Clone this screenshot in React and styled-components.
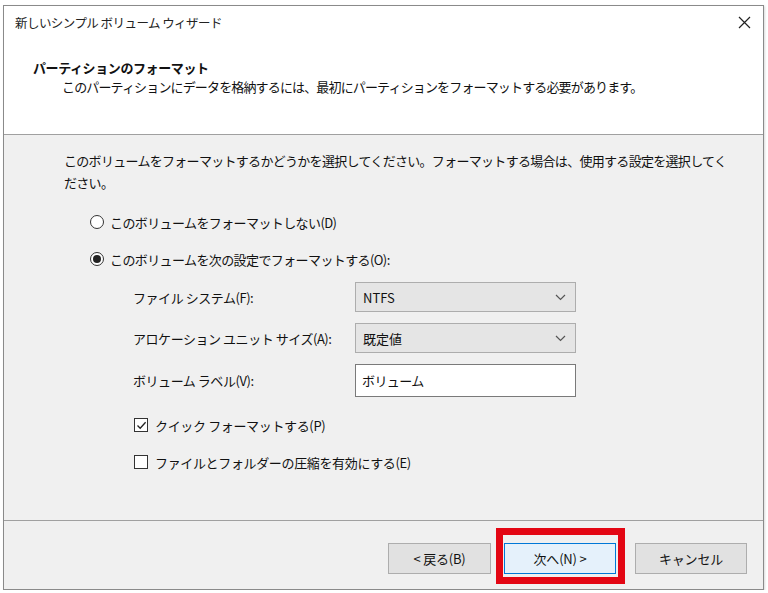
import styled, { createGlobalStyle } from 'styled-components';

const GlobalStyle = createGlobalStyle`
  html, body {
    margin: 0;
    padding: 0;
    background: #ffffff;
  }

  body {
    font-family: "Noto Sans CJK JP", "Noto Sans", sans-serif;
    font-size: 13px;
    color: #111;
  }
`;

const CloseIcon = () => (
  <svg width="13" height="13" viewBox="0 0 13 13">
    <path d="M1 1 L12 12 M12 1 L1 12" stroke="#222" strokeWidth="1.2" fill="none" />
  </svg>
);

const Chevron = () => (
  <svg width="11" height="7" viewBox="0 0 11 7">
    <path d="M1 1 L5.5 5.5 L10 1" stroke="#555" strokeWidth="1.2" fill="none" />
  </svg>
);

const CheckMark = () => (
  <svg width="11" height="11" viewBox="0 0 11 11">
    <path d="M1.5 5.5 L4.2 8.3 L9.6 2.2" stroke="#222" strokeWidth="1.3" fill="none" />
  </svg>
);

const Radio = ({ checked, children }) => (
  <RadioRow>
    <RadioCircle>{checked && <RadioDot />}</RadioCircle>
    <span>{children}</span>
  </RadioRow>
);

const Checkbox = ({ checked, children }) => (
  <CheckRow>
    <CheckBox>{checked && <CheckMark />}</CheckBox>
    <span>{children}</span>
  </CheckRow>
);

const Select = ({ value }) => (
  <SelectBox>
    <span>{value}</span>
    <Chevron />
  </SelectBox>
);

const App = () => (
  <>
    <GlobalStyle />
    <Window>
      <Header>
        <TitleBar>
          <Title>新しいシンプル ボリューム ウィザード</Title>
          <CloseIcon />
        </TitleBar>
        <Heading>パーティションのフォーマット</Heading>
        <SubHeading>
          このパーティションにデータを格納するには、最初にパーティションをフォーマットする必要があります。
        </SubHeading>
      </Header>

      <Body>
        <Intro>
          このボリュームをフォーマットするかどうかを選択してください。フォーマットする場合は、使用する設定を選択してく
          <br />
          ださい。
        </Intro>

        <RadioGroup>
          <Radio>このボリュームをフォーマットしない(D)</Radio>
          <Radio checked>このボリュームを次の設定でフォーマットする(O):</Radio>
        </RadioGroup>

        <Settings>
          <FieldLabel>ファイル システム(F):</FieldLabel>
          <Select value="NTFS" />
          <FieldLabel>アロケーション ユニット サイズ(A):</FieldLabel>
          <Select value="既定値" />
          <FieldLabel>ボリューム ラベル(V):</FieldLabel>
          <TextInput>ボリューム</TextInput>
        </Settings>

        <Options>
          <Checkbox checked>クイック フォーマットする(P)</Checkbox>
          <Checkbox>ファイルとフォルダーの圧縮を有効にする(E)</Checkbox>
        </Options>
      </Body>

      <Footer>
        <Button $width={103}>&lt;&nbsp;戻る(B)</Button>
        <Highlight>
          <Button $width={112} $primary>
            次へ(N)&nbsp;&gt;
          </Button>
          <RedFrame />
        </Highlight>
        <Button $width={112} $gap={19}>
          キャンセル
        </Button>
      </Footer>
    </Window>
  </>
);

//#region Styles
const Window = styled.div`
  box-sizing: border-box;
  width: 761px;
  height: 585px;
  margin: 5px 0 0 3px;
  border: 1px solid #8a8a8a;
  background: #f0f0f0;
  display: flex;
  flex-direction: column;
  box-shadow: 1px 1px 2px rgba(0, 0, 0, 0.15);
`;

const Header = styled.div`
  box-sizing: border-box;
  height: 129px;
  background: #ffffff;
  border-bottom: 1px solid #a0a0a0;
  display: flex;
  flex-direction: column;
`;

const TitleBar = styled.div`
  height: 33px;
  padding: 0 12px 0 11px;
  display: flex;
  align-items: center;
  justify-content: space-between;
`;

const Title = styled.span`
  font-size: 12.5px;
  letter-spacing: -0.55px;
  color: #222;
`;

const Heading = styled.div`
  margin-top: 19px;
  padding-left: 29px;
  line-height: 20px;
  font-weight: 700;
  letter-spacing: -0.4px;
`;

const SubHeading = styled.div`
  padding-left: 58px;
  line-height: 18px;
  letter-spacing: -0.85px;
`;

const Body = styled.div`
  box-sizing: border-box;
  height: 386px;
  padding: 15px 0 0 60px;
  border-bottom: 1px solid #a0a0a0;
  display: flex;
  flex-direction: column;
`;

const Intro = styled.p`
  margin: 0;
  line-height: 22px;
  letter-spacing: -0.7px;
  white-space: nowrap;
`;

const RadioGroup = styled.div`
  margin-top: 16px;
  padding-left: 26px;
  display: flex;
  flex-direction: column;
  gap: 13px;
`;

const RadioRow = styled.label`
  height: 24px;
  display: flex;
  align-items: center;
  gap: 6px;
  letter-spacing: -0.6px;
`;

const RadioCircle = styled.span`
  box-sizing: border-box;
  width: 14px;
  height: 14px;
  border: 1px solid #333;
  border-radius: 50%;
  background: #fff;
  display: flex;
  align-items: center;
  justify-content: center;
`;

const RadioDot = styled.span`
  width: 8px;
  height: 8px;
  border-radius: 50%;
  background: #222;
`;

const Settings = styled.div`
  margin-top: 11px;
  padding-left: 69px;
  display: grid;
  grid-template-columns: 222px 221px;
  row-gap: 11px;
  align-items: center;
`;

const FieldLabel = styled.span`
  letter-spacing: -0.45px;
`;

const SelectBox = styled.div`
  box-sizing: border-box;
  height: 30px;
  padding: 0 9px 0 7px;
  border: 1px solid #adadad;
  background: #e5e5e5;
  display: flex;
  align-items: center;
  justify-content: space-between;
`;

const TextInput = styled.div`
  box-sizing: border-box;
  height: 33px;
  padding: 0 6px;
  border: 1px solid #7a7a7a;
  background: #ffffff;
  display: flex;
  align-items: center;
  letter-spacing: -0.6px;
`;

const Options = styled.div`
  margin-top: 16px;
  padding-left: 70px;
  display: flex;
  flex-direction: column;
  gap: 13px;
`;

const CheckRow = styled.label`
  height: 24px;
  display: flex;
  align-items: center;
  gap: 7px;
  letter-spacing: -0.35px;
`;

const CheckBox = styled.span`
  box-sizing: border-box;
  width: 14px;
  height: 14px;
  border: 1px solid #333;
  background: #fff;
  display: flex;
  align-items: center;
  justify-content: center;
`;

const Footer = styled.div`
  flex: 1;
  padding: 22px 16px 0 0;
  display: flex;
  align-items: flex-start;
  justify-content: flex-end;
`;

const Highlight = styled.div`
  position: relative;
  margin-left: 13px;
  display: flex;
`;

const RedFrame = styled.div`
  position: absolute;
  left: -8px;
  right: -9px;
  top: -15px;
  bottom: -10px;
  border: 7px solid #e30613;
  pointer-events: none;
`;

const Button = styled.button`
  box-sizing: border-box;
  width: ${({ $width }) => $width}px;
  height: 31px;
  margin-left: ${({ $gap }) => ($gap ? `${$gap}px` : 0)};
  padding: 0;
  border: 1px solid ${({ $primary }) => ($primary ? '#0078d7' : '#adadad')};
  background: ${({ $primary }) => ($primary ? '#e5f1fb' : '#e1e1e1')};
  font-family: inherit;
  font-size: 13px;
  letter-spacing: -0.2px;
  color: #111;
`;
//#endregion Styles

export default App;
